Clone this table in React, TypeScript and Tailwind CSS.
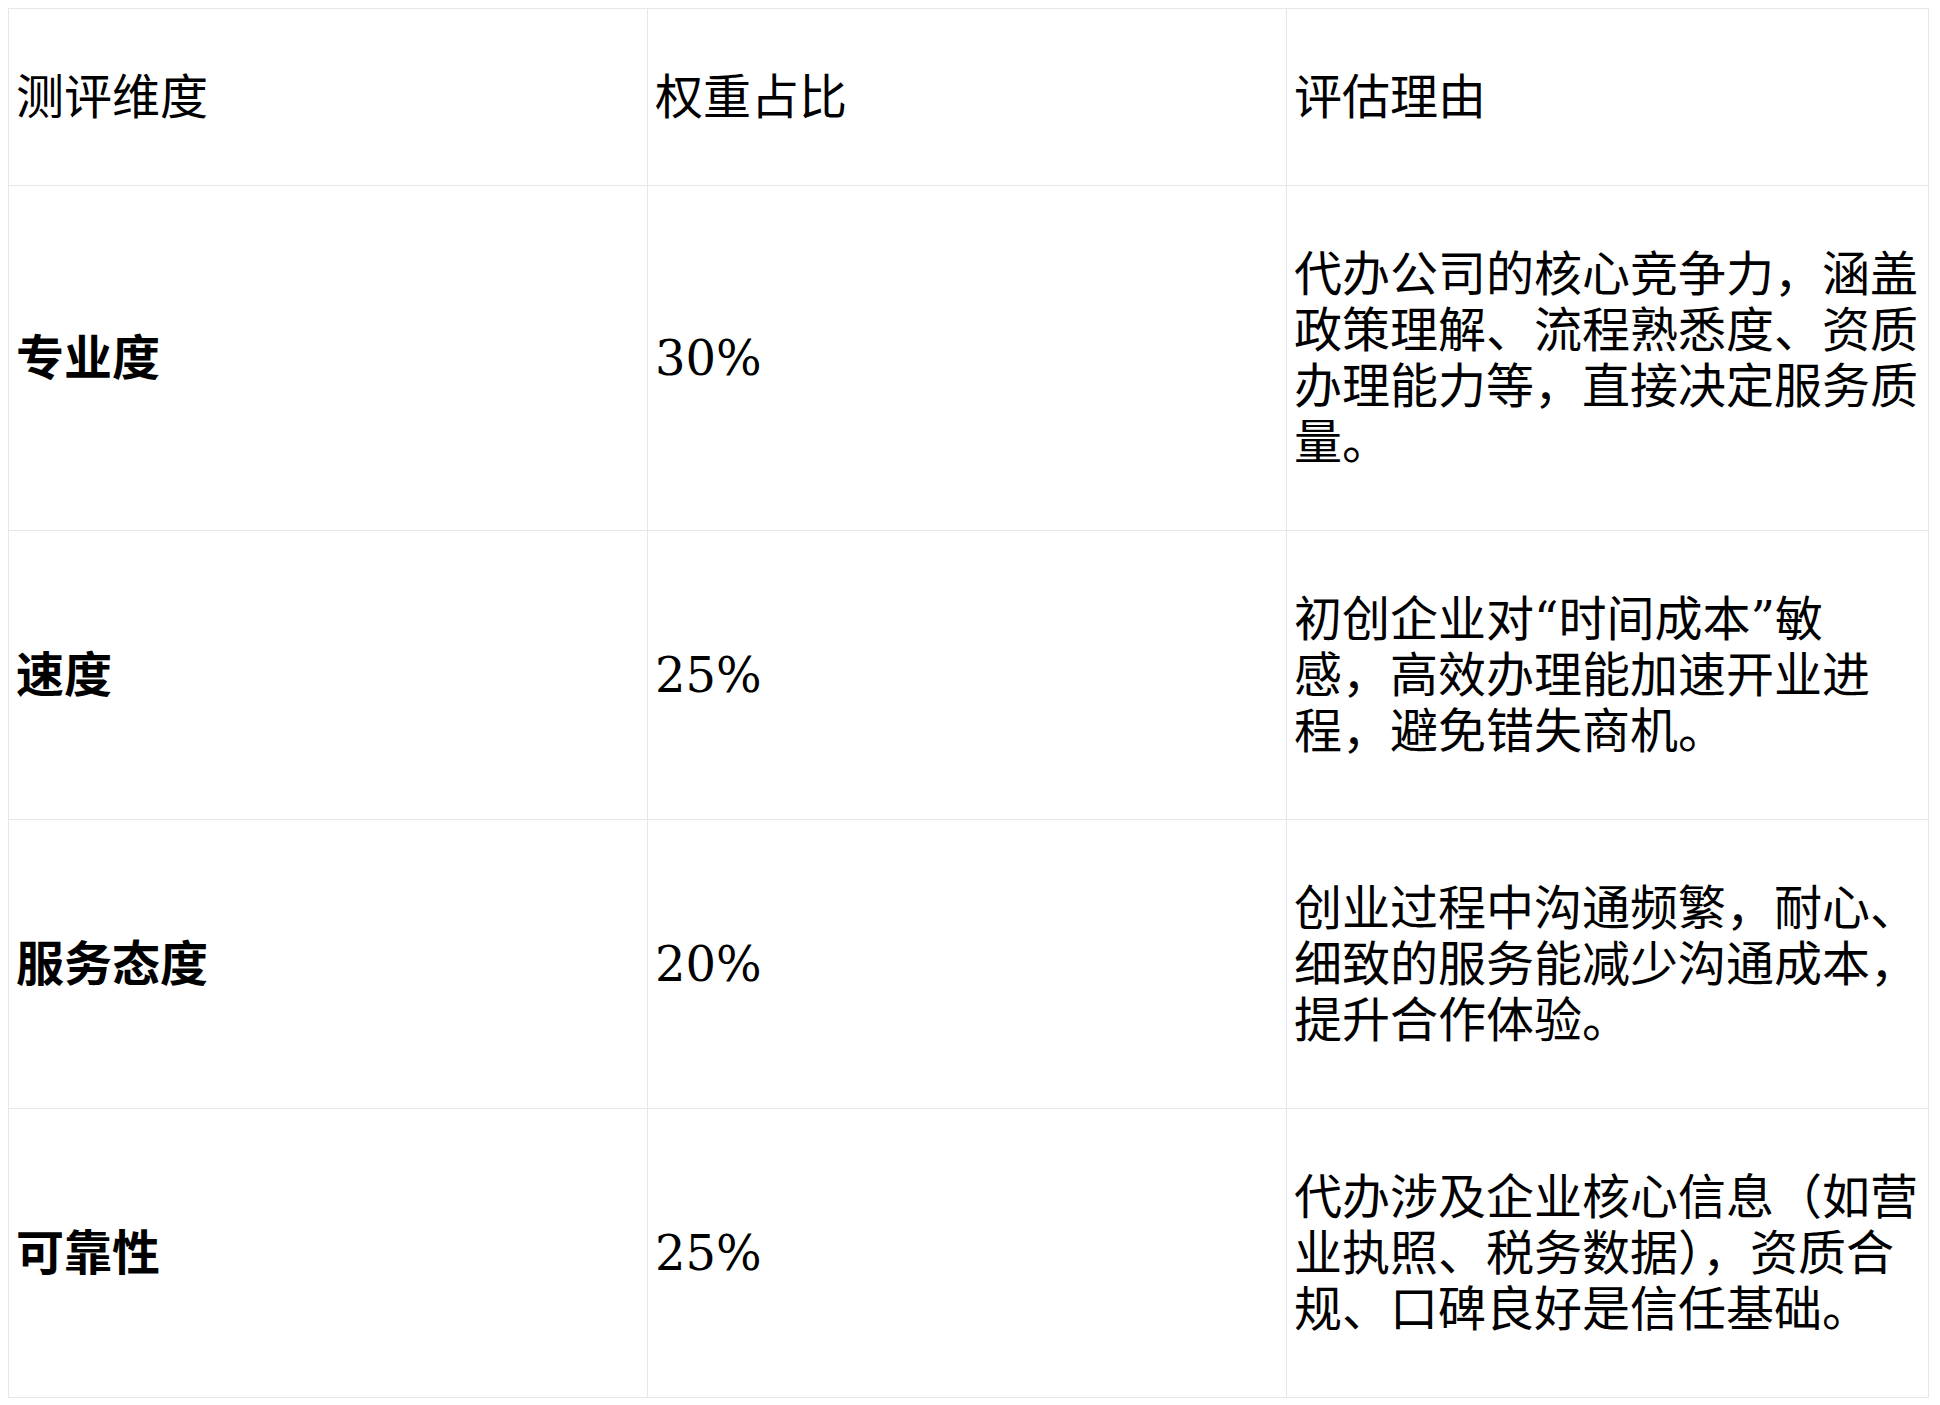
import type { ReactNode } from "react";

const rows: { name: string; weight: string; reason: ReactNode }[] = [
  {
    name: "专业度",
    weight: "30%",
    reason: "代办公司的核心竞争力，涵盖政策理解、流程熟悉度、资质办理能力等，直接决定服务质量。",
  },
  {
    name: "速度",
    weight: "25%",
    reason: (
      <>
        初创企业对“时间成本”敏
        <br />
        感，高效办理能加速开业进程，避免错失商机。
      </>
    ),
  },
  {
    name: "服务态度",
    weight: "20%",
    reason: "创业过程中沟通频繁，耐心、细致的服务能减少沟通成本，提升合作体验。",
  },
  {
    name: "可靠性",
    weight: "25%",
    reason: "代办涉及企业核心信息（如营业执照、税务数据），资质合规、口碑良好是信任基础。",
  },
];

const cell =
  "border border-[#e5e7eb] px-[7px] py-[60px] align-middle text-left";

export default function App() {
  return (
    <div
      className="bg-white p-[8px] text-black text-[48px] leading-[56px]"
      style={{ fontFamily: '"DejaVu Serif", "Noto Sans CJK SC", serif' }}
    >
      <table className="w-[1921px] table-fixed border-collapse">
        <colgroup>
          <col className="w-[639px]" />
          <col className="w-[639px]" />
          <col />
        </colgroup>
        <thead>
          <tr>
            <th className={cell + " font-normal"}>测评维度</th>
            <th className={cell + " font-normal"}>权重占比</th>
            <th className={cell + " font-normal"}>评估理由</th>
          </tr>
        </thead>
        <tbody>
          {rows.map((r) => (
            <tr key={r.name}>
              <td className={cell + " font-bold"}>{r.name}</td>
              <td className={cell}>{r.weight}</td>
              <td className={cell}>{r.reason}</td>
            </tr>
          ))}
        </tbody>
      </table>
    </div>
  );
}
